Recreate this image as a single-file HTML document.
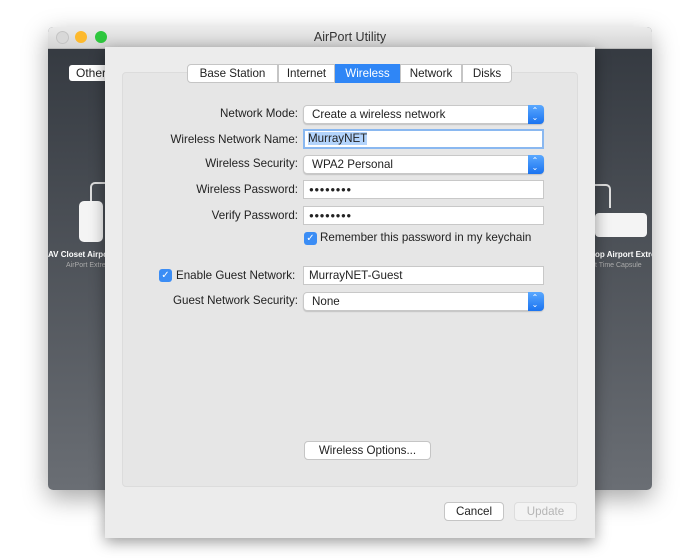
<!DOCTYPE html><html><head><style>
body{margin:0;width:700px;height:558px;background:#fff;position:relative;overflow:hidden;font-family:"Liberation Sans",sans-serif;font-size:11.6px;color:#222}
.a{position:absolute;white-space:nowrap}
.win{left:48px;top:27px;width:604px;height:463px;border-radius:5px;box-shadow:0 8px 25px rgba(0,0,0,.35);overflow:hidden;background:linear-gradient(#33383f,#6a6e74)}
.tb{left:0;top:0;width:604px;height:21px;background:linear-gradient(#ebebeb,#d4d4d4);border-bottom:1px solid #b8b8b8;text-align:center;line-height:21px;font-size:12.5px;color:#333}
.dot{width:12px;height:12px;border-radius:50%;top:4px}
.sheet{left:105px;top:47px;width:490px;height:491px;background:#ececec;box-shadow:0 4px 14px rgba(0,0,0,.4)}
.box{left:122px;top:72px;width:456px;height:415px;background:#e6e6e6;border:1px solid #dcdcdc;border-radius:4px;box-sizing:border-box}
.lab{text-align:right;width:200px;left:98px}
.f{left:303px;width:241px;height:19px;background:#fff;border:1px solid #c8c8c8;box-sizing:border-box;line-height:17px;padding-left:5px}
.pop{border-radius:4px;box-shadow:0 1px 1px rgba(0,0,0,.15);padding-left:8px}
.pop:after{content:"";position:absolute;right:-1px;top:-1px;width:16px;height:19px;background:linear-gradient(#5aa8ff,#1a73f0);border-radius:0 4px 4px 0}
.pop i{position:absolute;right:3px;top:1px;z-index:2;color:#fff;font-style:normal;font-size:8px;line-height:7px;text-align:center;width:10px}
.cb{width:13px;height:13px;border-radius:3px;background:#3b8df5;color:#fff;font-size:10px;line-height:13px;text-align:center}
.btn{background:#fff;border:1px solid #c5c5c5;border-radius:4px;text-align:center;height:19px;line-height:17px;box-sizing:border-box}
.tab{top:64px;height:19px;line-height:17px;text-align:center;background:#fff;border:1px solid #c5c5c5;box-sizing:border-box;margin-left:-1px}
</style></head><body>
<div class="a win">
<div class="a tb">AirPort Utility</div>
<div class="a dot" style="left:8px;background:#d8d8d8;border:1px solid #c4c4c4;width:11px;height:11px"></div>
<div class="a dot" style="left:27px;background:#fdb92d"></div>
<div class="a dot" style="left:47px;background:#2ec73e"></div>
<div class="a" style="left:21px;top:38px;width:40px;height:16px;background:#fff;border-radius:3px;line-height:16px;padding-left:7px;font-size:12px">Other</div>
<div class="a" style="left:42px;top:155px;width:20px;height:20px;border:2px solid #ddd;border-right:none;border-bottom:none;border-radius:5px 0 0 0"></div>
<div class="a" style="left:31px;top:174px;width:24px;height:41px;background:#f4f4f4;border-radius:5px"></div>
<div class="a" style="left:0;top:223px;color:#fff;font-size:8px;font-weight:bold">AV Closet Airpo</div>
<div class="a" style="left:18px;top:235px;color:#aaa;font-size:7px">AirPort Extre</div>
<div class="a" style="left:547px;top:157px;width:14px;height:22px;border:2px solid #ddd;border-left:none;border-bottom:none;border-radius:0 5px 0 0"></div>
<div class="a" style="left:547px;top:186px;width:52px;height:24px;background:#f4f4f4;border-radius:4px"></div>
<div class="a" style="left:547px;top:223px;color:#fff;font-size:8px;font-weight:bold">op Airport Extre</div>
<div class="a" style="left:547px;top:235px;color:#aaa;font-size:7px">t Time Capsule</div>
</div>
<div class="a sheet"></div>
<div class="a box"></div>
<div class="a tab" style="left:188px;width:91px;border-radius:4px 0 0 4px">Base Station</div>
<div class="a tab" style="left:279px;width:57px">Internet</div>
<div class="a tab" style="left:336px;width:65px;background:#2f86f6;border-color:#2f86f6;color:#fff">Wireless</div>
<div class="a tab" style="left:401px;width:62px">Network</div>
<div class="a tab" style="left:463px;width:50px;border-radius:0 4px 4px 0">Disks</div>

<div class="a lab" style="top:107px">Network Mode:</div>
<div class="a f pop" style="top:105px">Create a wireless network<i>&#8963;<br>&#8964;</i></div>
<div class="a lab" style="top:133px">Wireless Network Name:</div>
<div class="a f" style="top:129px;height:20px;border:2px solid #8ab8f0;padding-left:3px;line-height:16px"><span style="background:#b3d4fc">MurrayNET</span></div>
<div class="a lab" style="top:157px">Wireless Security:</div>
<div class="a f pop" style="top:155px">WPA2 Personal<i>&#8963;<br>&#8964;</i></div>
<div class="a lab" style="top:183px">Wireless Password:</div>
<div class="a f" style="top:180px;font-size:8px;letter-spacing:0.5px">●●●●●●●●</div>
<div class="a lab" style="top:209px">Verify Password:</div>
<div class="a f" style="top:206px;font-size:8px;letter-spacing:0.5px">●●●●●●●●</div>
<div class="a cb" style="left:304px;top:232px">✓</div>
<div class="a" style="left:320px;top:231px">Remember this password in my keychain</div>
<div class="a cb" style="left:159px;top:269px">✓</div>
<div class="a" style="left:176px;top:269px">Enable Guest Network:</div>
<div class="a f" style="top:266px">MurrayNET-Guest</div>
<div class="a lab" style="top:294px">Guest Network Security:</div>
<div class="a f pop" style="top:292px">None<i>&#8963;<br>&#8964;</i></div>
<div class="a btn" style="left:304px;top:441px;width:127px">Wireless Options...</div>
<div class="a btn" style="left:444px;top:502px;width:60px">Cancel</div>
<div class="a btn" style="left:514px;top:502px;width:63px;background:#f3f3f3;border-color:#ddd;color:#b5b5b5">Update</div>
</body></html>
